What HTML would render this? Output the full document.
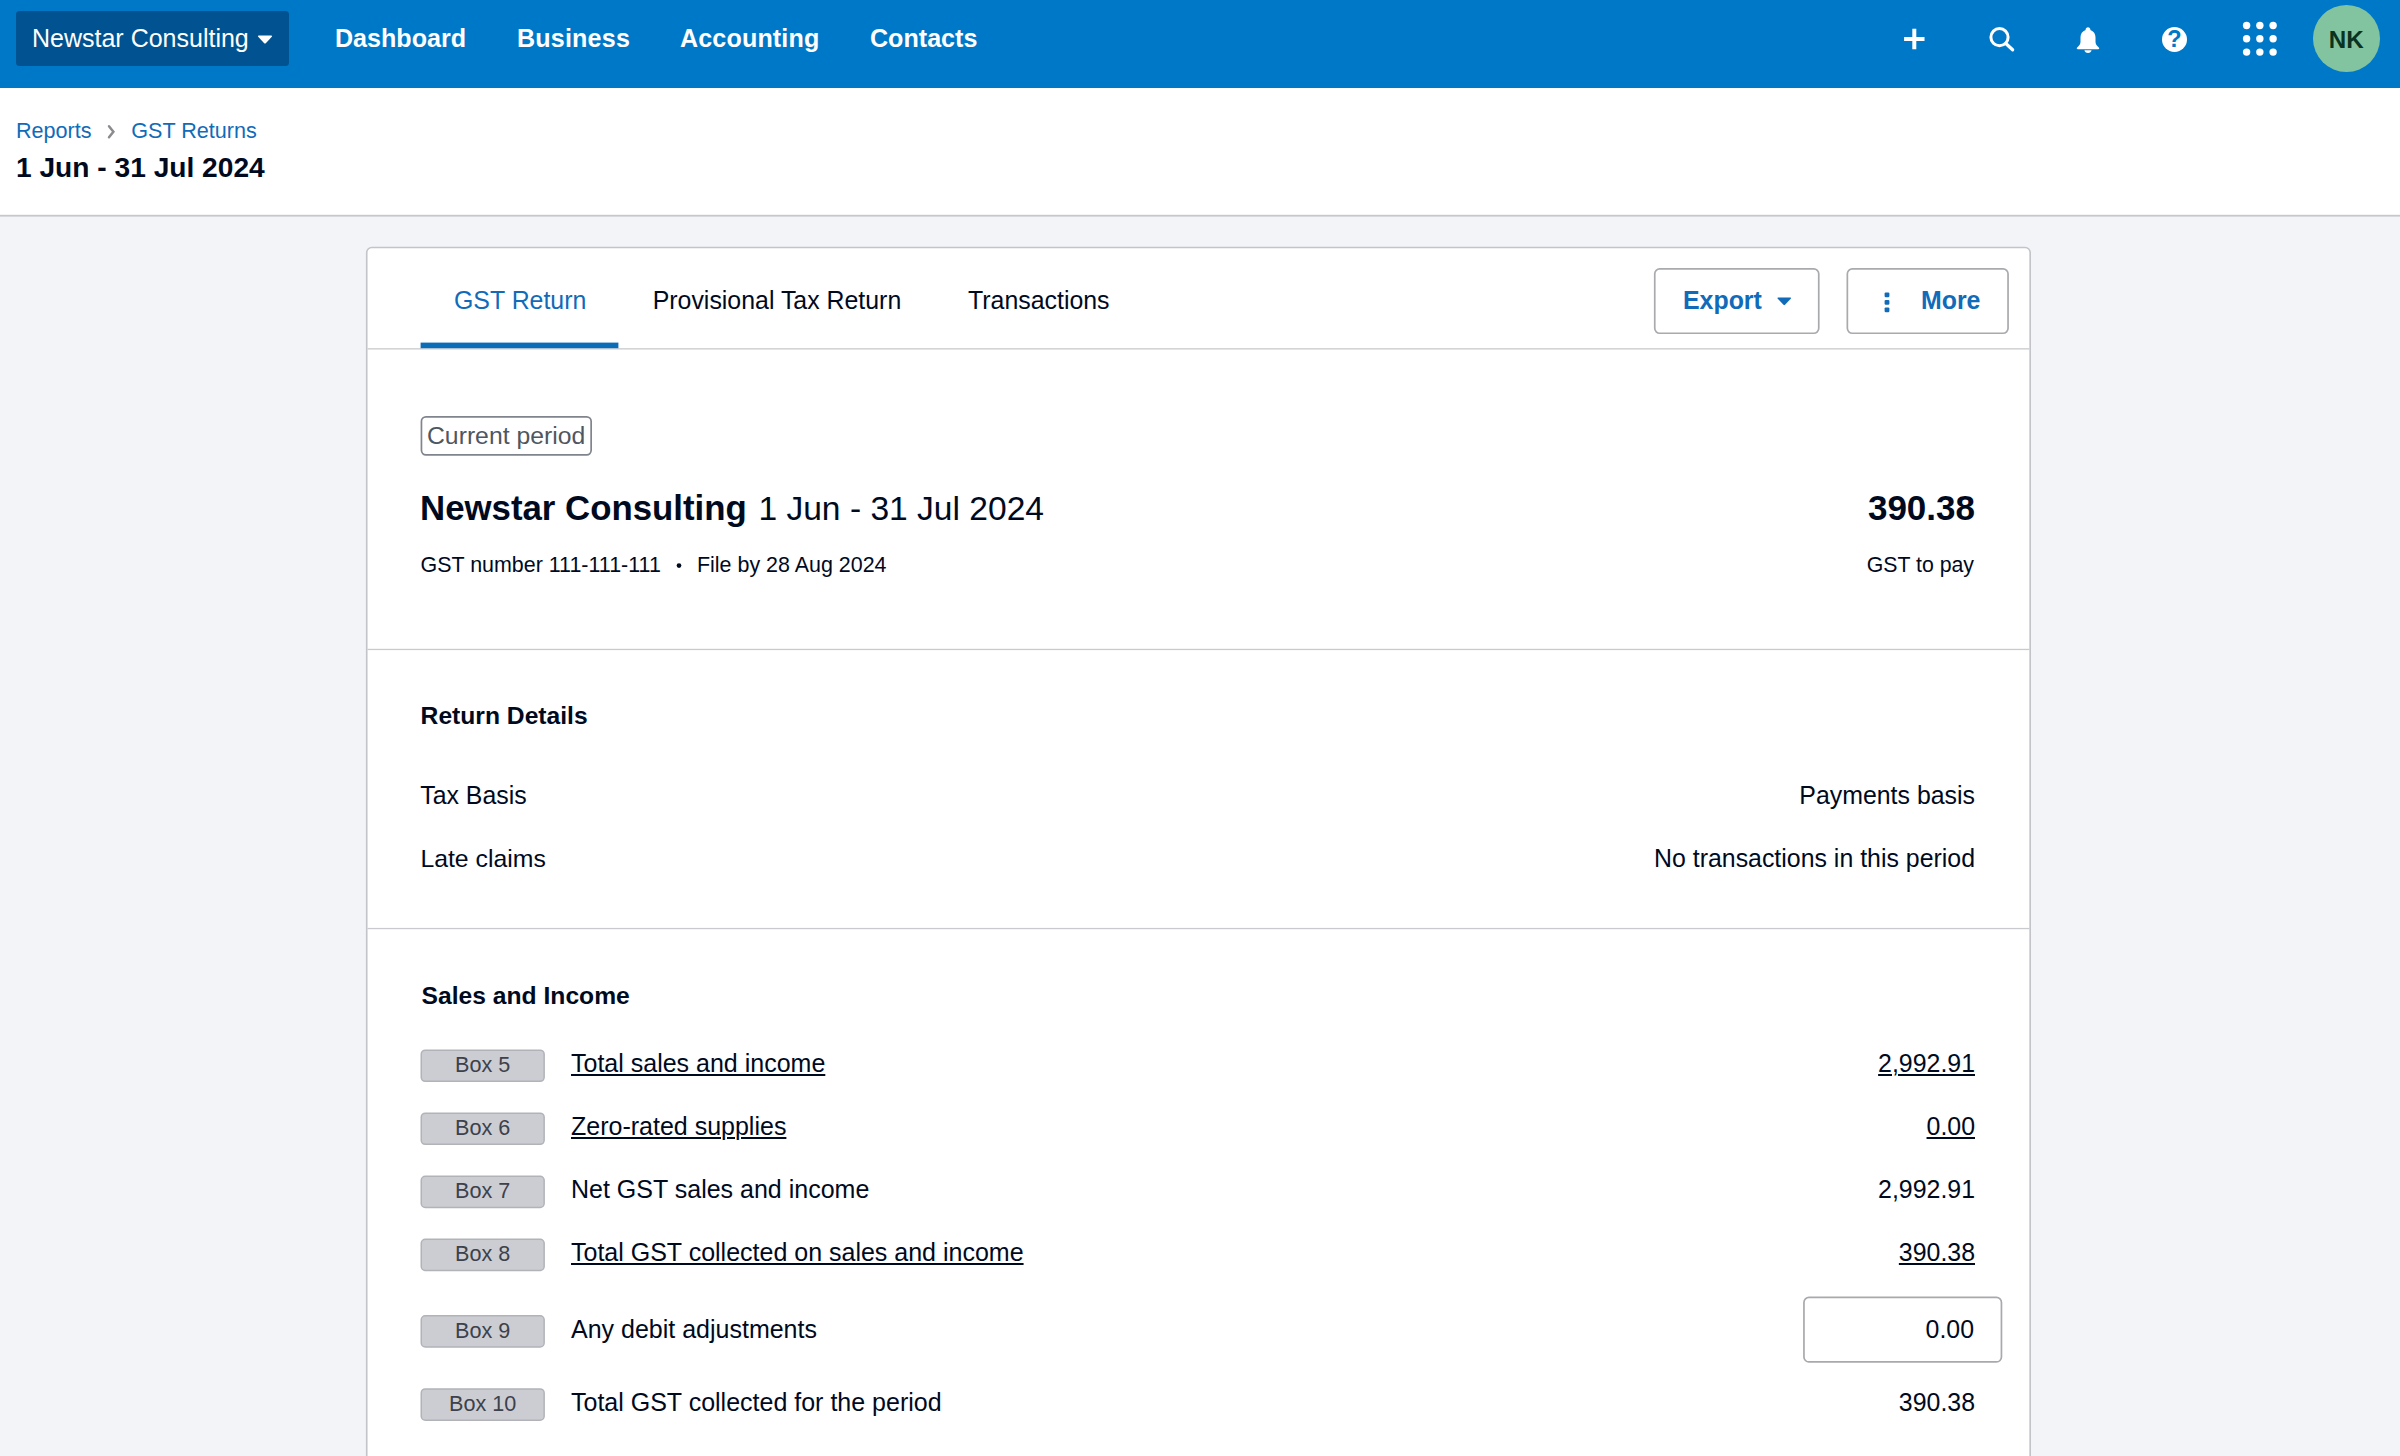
<!DOCTYPE html>
<html lang="en"><head><meta charset="utf-8"><title>GST Return - Newstar Consulting</title>
<style>
html,body{margin:0;padding:0;background:#f2f4f8}
body{font-family:"Liberation Sans",sans-serif}
#page{position:relative;width:2400px;height:1456px;overflow:hidden;background:#f2f4f8;font-family:"Liberation Sans",sans-serif}
.t{position:absolute;white-space:nowrap}
.b{position:absolute}
</style></head><body>
<div id="page">
<div class="b" style="left:0px;top:0px;width:2400px;height:88px;background:#0078c8"></div>
<div class="b" style="left:16px;top:11px;width:273px;height:55px;background:#005390;border-radius:3.5px"></div>
<div class="t " style="left:32px;top:24px;font-size:25px;line-height:28px;font-weight:400;color:#fff;">Newstar Consulting</div>
<svg class="b" style="left:257px;top:35px" width="16" height="9" viewBox="0 0 16 9"><path d="M1.6 0.6 H14.4 Q15.6 0.8 14.8 1.8 L8.8 8.2 Q8 9 7.2 8.2 L1.2 1.8 Q0.4 0.8 1.6 0.6Z" fill="#fff"/></svg>
<div class="t " style="left:335px;top:24px;font-size:25.1px;line-height:28px;font-weight:700;color:#fff;letter-spacing:0px">Dashboard</div>
<div class="t " style="left:517px;top:24px;font-size:25.1px;line-height:28px;font-weight:700;color:#fff;letter-spacing:0.18px">Business</div>
<div class="t " style="left:680px;top:24px;font-size:25.1px;line-height:28px;font-weight:700;color:#fff;letter-spacing:0.14px">Accounting</div>
<div class="t " style="left:870px;top:24px;font-size:25.1px;line-height:28px;font-weight:700;color:#fff;letter-spacing:0px">Contacts</div>
<svg class="b" style="left:1903px;top:27.6px" width="22" height="22" viewBox="0 0 22 22"><path d="M11.3 0.8V21.2M1.1 11H21.500" stroke="#fff" stroke-width="4" fill="none"/></svg>
<svg class="b" style="left:1988px;top:26px" width="28" height="28" viewBox="0 0 28 28"><circle cx="11.500" cy="11.200" r="8.600" stroke="#fff" stroke-width="3" fill="none"/><path d="M17.800 17.500L24.600 23.800" stroke="#fff" stroke-width="3.300" stroke-linecap="round"/></svg>
<svg class="b" style="left:2076px;top:25.5px" width="24" height="28" viewBox="0 0 24 28"><path d="M12 1.2c-1.400 0-2.400 1-2.400 2.300v.6C6.300 5.300 4.500 8.100 4.500 11.300v4.500c0 2.200-1 3.800-3.300 5.600-.8.700-.4 1.800.6 1.800H22.200c1 0 1.400-1.100.6-1.800-2.300-1.800-3.300-3.400-3.300-5.600v-4.500c0-3.200-1.800-6-5.100-7.200v-.6c0-1.300-1-2.300-2.400-2.300z" fill="#fff"/><path d="M8.400 24.300h7.200c-.3 1.600-1.700 2.600-3.600 2.600s-3.300-1-3.600-2.600z" fill="#fff"/></svg>
<svg class="b" style="left:2161px;top:26px" width="27" height="27" viewBox="0 0 27 27"><circle cx="13.500" cy="13.500" r="12.500" fill="#fff"/><text x="13.500" y="21.400" text-anchor="middle" font-family="Liberation Sans, sans-serif" font-weight="700" font-size="23.500" fill="#0078c8">?</text></svg>
<svg class="b" style="left:2242px;top:21px" width="36" height="36" viewBox="0 0 36 36"><circle cx="4.6" cy="4.5" r="3.7" fill="#fff"/><circle cx="4.6" cy="17.8" r="3.7" fill="#fff"/><circle cx="4.6" cy="31.1" r="3.7" fill="#fff"/><circle cx="17.85" cy="4.5" r="3.7" fill="#fff"/><circle cx="17.85" cy="17.8" r="3.7" fill="#fff"/><circle cx="17.85" cy="31.1" r="3.7" fill="#fff"/><circle cx="31.1" cy="4.5" r="3.7" fill="#fff"/><circle cx="31.1" cy="17.8" r="3.7" fill="#fff"/><circle cx="31.1" cy="31.1" r="3.7" fill="#fff"/></svg>
<div class="b" style="left:2312.8px;top:5px;width:67px;height:67px;background:#83c4a0;border-radius:50%"></div>
<div class="t " style="left:2328.8px;top:26px;font-size:24.2px;line-height:27px;font-weight:700;color:#0a3320;">NK</div>
<div class="b" style="left:0px;top:88px;width:2400px;height:127px;background:#fff"></div>
<svg class="b" style="left:0;top:0;overflow:visible" width="1" height="1"><rect x="0" y="214.8" width="2400.00" height="1.80" fill="#c6c7ca"/></svg>
<div class="t " style="left:16px;top:118px;font-size:21.6px;line-height:25px;font-weight:400;color:#116bb9;">Reports</div>
<svg class="b" style="left:105.6px;top:124px" width="10" height="16" viewBox="0 0 10 16"><path d="M3 2.300L7.400 7.800L3 13.300" stroke="#8a8b8f" stroke-width="2.500" fill="none" stroke-linecap="round" stroke-linejoin="miter"/></svg>
<div class="t " style="left:131.2px;top:118px;font-size:21.6px;line-height:25px;font-weight:400;color:#116bb9;">GST Returns</div>
<div class="t " style="left:16px;top:152px;font-size:28.15px;line-height:31px;font-weight:700;color:#000a1e;">1 Jun - 31 Jul 2024</div>
<svg class="b" style="left:0;top:0;overflow:visible" width="1" height="1"><rect x="366.72" y="247.52" width="1663.45" height="1311.65" rx="5" fill="#fff" stroke="#c2c4c9" stroke-width="1.65"/></svg>
<div class="t " style="left:454px;top:286px;font-size:24.9px;line-height:28px;font-weight:400;color:#116bb9;">GST Return</div>
<div class="t " style="left:652.7px;top:286px;font-size:24.9px;line-height:28px;font-weight:400;color:#000a1e;">Provisional Tax Return</div>
<div class="t " style="left:968px;top:286px;font-size:24.9px;line-height:28px;font-weight:400;color:#000a1e;">Transactions</div>
<svg class="b" style="left:0;top:0;overflow:visible" width="1" height="1"><rect x="367.5" y="348.2" width="1662.00" height="1.30" fill="#c9cacd"/></svg>
<svg class="b" style="left:0;top:0;overflow:visible" width="1" height="1"><rect x="420.6" y="342.6" width="197.80" height="5.60" fill="#0b6db7"/></svg>
<svg class="b" style="left:0;top:0;overflow:visible" width="1" height="1"><rect x="1654.75" y="268.85" width="164.00" height="64.40" rx="5" fill="#fff" stroke="#a9aaae" stroke-width="1.7"/></svg>
<div class="t " style="left:1683px;top:286px;font-size:24.9px;line-height:28px;font-weight:700;color:#116bb9;">Export</div>
<svg class="b" style="left:1775.5px;top:297.2px" width="16.5" height="8.6" viewBox="0 0 16 9"><path d="M1.6 0.6 H14.4 Q15.6 0.8 14.8 1.8 L8.8 8.2 Q8 9 7.2 8.2 L1.2 1.8 Q0.4 0.8 1.6 0.6Z" fill="#116bb9"/></svg>
<svg class="b" style="left:0;top:0;overflow:visible" width="1" height="1"><rect x="1847.35" y="268.85" width="160.70" height="64.40" rx="5" fill="#fff" stroke="#a9aaae" stroke-width="1.7"/></svg>
<svg class="b" style="left:1882.800px;top:290.400px" width="8" height="24" viewBox="0 0 8 24"><rect x="1.600" y="2.400" width="4.800" height="4.800" rx="1.200" fill="#116bb9"/><rect x="1.600" y="9.900" width="4.800" height="4.800" rx="1.200" fill="#116bb9"/><rect x="1.600" y="17.400" width="4.800" height="4.800" rx="1.200" fill="#116bb9"/></svg>
<div class="t " style="left:1921px;top:286px;font-size:24.9px;line-height:28px;font-weight:700;color:#116bb9;">More</div>
<svg class="b" style="left:0;top:0;overflow:visible" width="1" height="1"><rect x="421.45" y="416.85" width="169.70" height="38.00" rx="4.5" fill="#fff" stroke="#7f848d" stroke-width="1.7"/></svg>
<div class="t " style="left:427px;top:422px;font-size:24.75px;line-height:27px;font-weight:400;color:#50565f;">Current period</div>
<div class="t " style="left:420px;top:488px;font-size:34.8px;line-height:39px;font-weight:700;color:#000a1e;">Newstar Consulting <span style="font-weight:400;font-size:33.6px;margin-left:2px">1 Jun - 31 Jul 2024</span></div>
<div class="t " style="left:420.5px;top:553px;font-size:21.45px;line-height:24px;font-weight:400;color:#000a1e;">GST number 111-111-111</div>
<svg class="b" style="left:0;top:0;overflow:visible" width="1" height="1"><circle cx="679" cy="565.6" r="2.35" fill="#000a1e"/></svg>
<div class="t " style="left:697px;top:553px;font-size:21.45px;line-height:24px;font-weight:400;color:#000a1e;">File by 28 Aug 2024</div>
<div class="t " style="right:425px;top:488px;font-size:35px;line-height:39px;font-weight:700;color:#000a1e;">390.38</div>
<div class="t " style="right:426px;top:553px;font-size:21.3px;line-height:24px;font-weight:400;color:#000a1e;">GST to pay</div>
<svg class="b" style="left:0;top:0;overflow:visible" width="1" height="1"><rect x="367.5" y="648.8" width="1662.00" height="1.30" fill="#c9cacd"/></svg>
<div class="t " style="left:420.6px;top:702px;font-size:24.65px;line-height:27px;font-weight:700;color:#000a1e;">Return Details</div>
<div class="t " style="left:420.2px;top:781px;font-size:24.9px;line-height:28px;font-weight:400;color:#000a1e;">Tax Basis</div>
<div class="t " style="right:425px;top:781px;font-size:24.9px;line-height:28px;font-weight:400;color:#000a1e;">Payments basis</div>
<div class="t " style="left:420.4px;top:845px;font-size:24.8px;line-height:27px;font-weight:400;color:#000a1e;">Late claims</div>
<div class="t " style="right:425px;top:844px;font-size:24.9px;line-height:28px;font-weight:400;color:#000a1e;">No transactions in this period</div>
<svg class="b" style="left:0;top:0;overflow:visible" width="1" height="1"><rect x="367.5" y="927.9" width="1662.00" height="1.30" fill="#c9cacd"/></svg>
<div class="t " style="left:421.6px;top:982px;font-size:24.65px;line-height:27px;font-weight:700;color:#000a1e;">Sales and Income</div>
<svg class="b" style="left:0;top:0;overflow:visible" width="1" height="1"><rect x="421.25" y="1050.15" width="122.90" height="31.20" rx="4" fill="#cccdd2" stroke="#b1b3b8" stroke-width="1.5"/></svg>
<div class="t " style="left:420.5px;top:1052px;font-size:21.6px;line-height:25px;font-weight:400;color:#3c414b;width:124.4px;text-align:center">Box 5</div>
<div class="t " style="left:571px;top:1049px;font-size:25px;line-height:28px;font-weight:400;color:#000a1e;text-decoration:underline;text-decoration-thickness:1.7px;text-underline-offset:2px;">Total sales and income</div>
<div class="t " style="right:425px;top:1049px;font-size:24.9px;line-height:28px;font-weight:400;color:#000a1e;text-decoration:underline;text-decoration-thickness:1.7px;text-underline-offset:2px;">2,992.91</div>
<svg class="b" style="left:0;top:0;overflow:visible" width="1" height="1"><rect x="421.25" y="1113.15" width="122.90" height="31.20" rx="4" fill="#cccdd2" stroke="#b1b3b8" stroke-width="1.5"/></svg>
<div class="t " style="left:420.5px;top:1115px;font-size:21.6px;line-height:25px;font-weight:400;color:#3c414b;width:124.4px;text-align:center">Box 6</div>
<div class="t " style="left:571px;top:1112px;font-size:25px;line-height:28px;font-weight:400;color:#000a1e;text-decoration:underline;text-decoration-thickness:1.7px;text-underline-offset:2px;">Zero-rated supplies</div>
<div class="t " style="right:425px;top:1112px;font-size:24.9px;line-height:28px;font-weight:400;color:#000a1e;text-decoration:underline;text-decoration-thickness:1.7px;text-underline-offset:2px;">0.00</div>
<svg class="b" style="left:0;top:0;overflow:visible" width="1" height="1"><rect x="421.25" y="1176.25" width="122.90" height="31.20" rx="4" fill="#cccdd2" stroke="#b1b3b8" stroke-width="1.5"/></svg>
<div class="t " style="left:420.5px;top:1178px;font-size:21.6px;line-height:25px;font-weight:400;color:#3c414b;width:124.4px;text-align:center">Box 7</div>
<div class="t " style="left:571px;top:1175px;font-size:25px;line-height:28px;font-weight:400;color:#000a1e;">Net GST sales and income</div>
<div class="t " style="right:425px;top:1175px;font-size:24.9px;line-height:28px;font-weight:400;color:#000a1e;">2,992.91</div>
<svg class="b" style="left:0;top:0;overflow:visible" width="1" height="1"><rect x="421.25" y="1239.25" width="122.90" height="31.20" rx="4" fill="#cccdd2" stroke="#b1b3b8" stroke-width="1.5"/></svg>
<div class="t " style="left:420.5px;top:1241px;font-size:21.6px;line-height:25px;font-weight:400;color:#3c414b;width:124.4px;text-align:center">Box 8</div>
<div class="t " style="left:571px;top:1238px;font-size:25px;line-height:28px;font-weight:400;color:#000a1e;text-decoration:underline;text-decoration-thickness:1.7px;text-underline-offset:2px;">Total GST collected on sales and income</div>
<div class="t " style="right:425px;top:1238px;font-size:24.9px;line-height:28px;font-weight:400;color:#000a1e;text-decoration:underline;text-decoration-thickness:1.7px;text-underline-offset:2px;">390.38</div>
<svg class="b" style="left:0;top:0;overflow:visible" width="1" height="1"><rect x="421.25" y="1315.75" width="122.90" height="31.20" rx="4" fill="#cccdd2" stroke="#b1b3b8" stroke-width="1.5"/></svg>
<div class="t " style="left:420.5px;top:1318px;font-size:21.6px;line-height:25px;font-weight:400;color:#3c414b;width:124.4px;text-align:center">Box 9</div>
<div class="t " style="left:571px;top:1315px;font-size:25px;line-height:28px;font-weight:400;color:#000a1e;">Any debit adjustments</div>
<svg class="b" style="left:0;top:0;overflow:visible" width="1" height="1"><rect x="421.25" y="1388.95" width="122.90" height="31.20" rx="4" fill="#cccdd2" stroke="#b1b3b8" stroke-width="1.5"/></svg>
<div class="t " style="left:420.5px;top:1391px;font-size:21.6px;line-height:25px;font-weight:400;color:#3c414b;width:124.4px;text-align:center">Box 10</div>
<div class="t " style="left:571px;top:1388px;font-size:25px;line-height:28px;font-weight:400;color:#000a1e;">Total GST collected for the period</div>
<div class="t " style="right:425px;top:1388px;font-size:24.9px;line-height:28px;font-weight:400;color:#000a1e;">390.38</div>
<svg class="b" style="left:0;top:0;overflow:visible" width="1" height="1"><rect x="1803.95" y="1297.45" width="197.50" height="64.50" rx="5" fill="#fff" stroke="#a8a9ad" stroke-width="1.7"/></svg>
<div class="t " style="right:426px;top:1315px;font-size:24.9px;line-height:28px;font-weight:400;color:#000a1e;">0.00</div>
</div>
</body></html>
